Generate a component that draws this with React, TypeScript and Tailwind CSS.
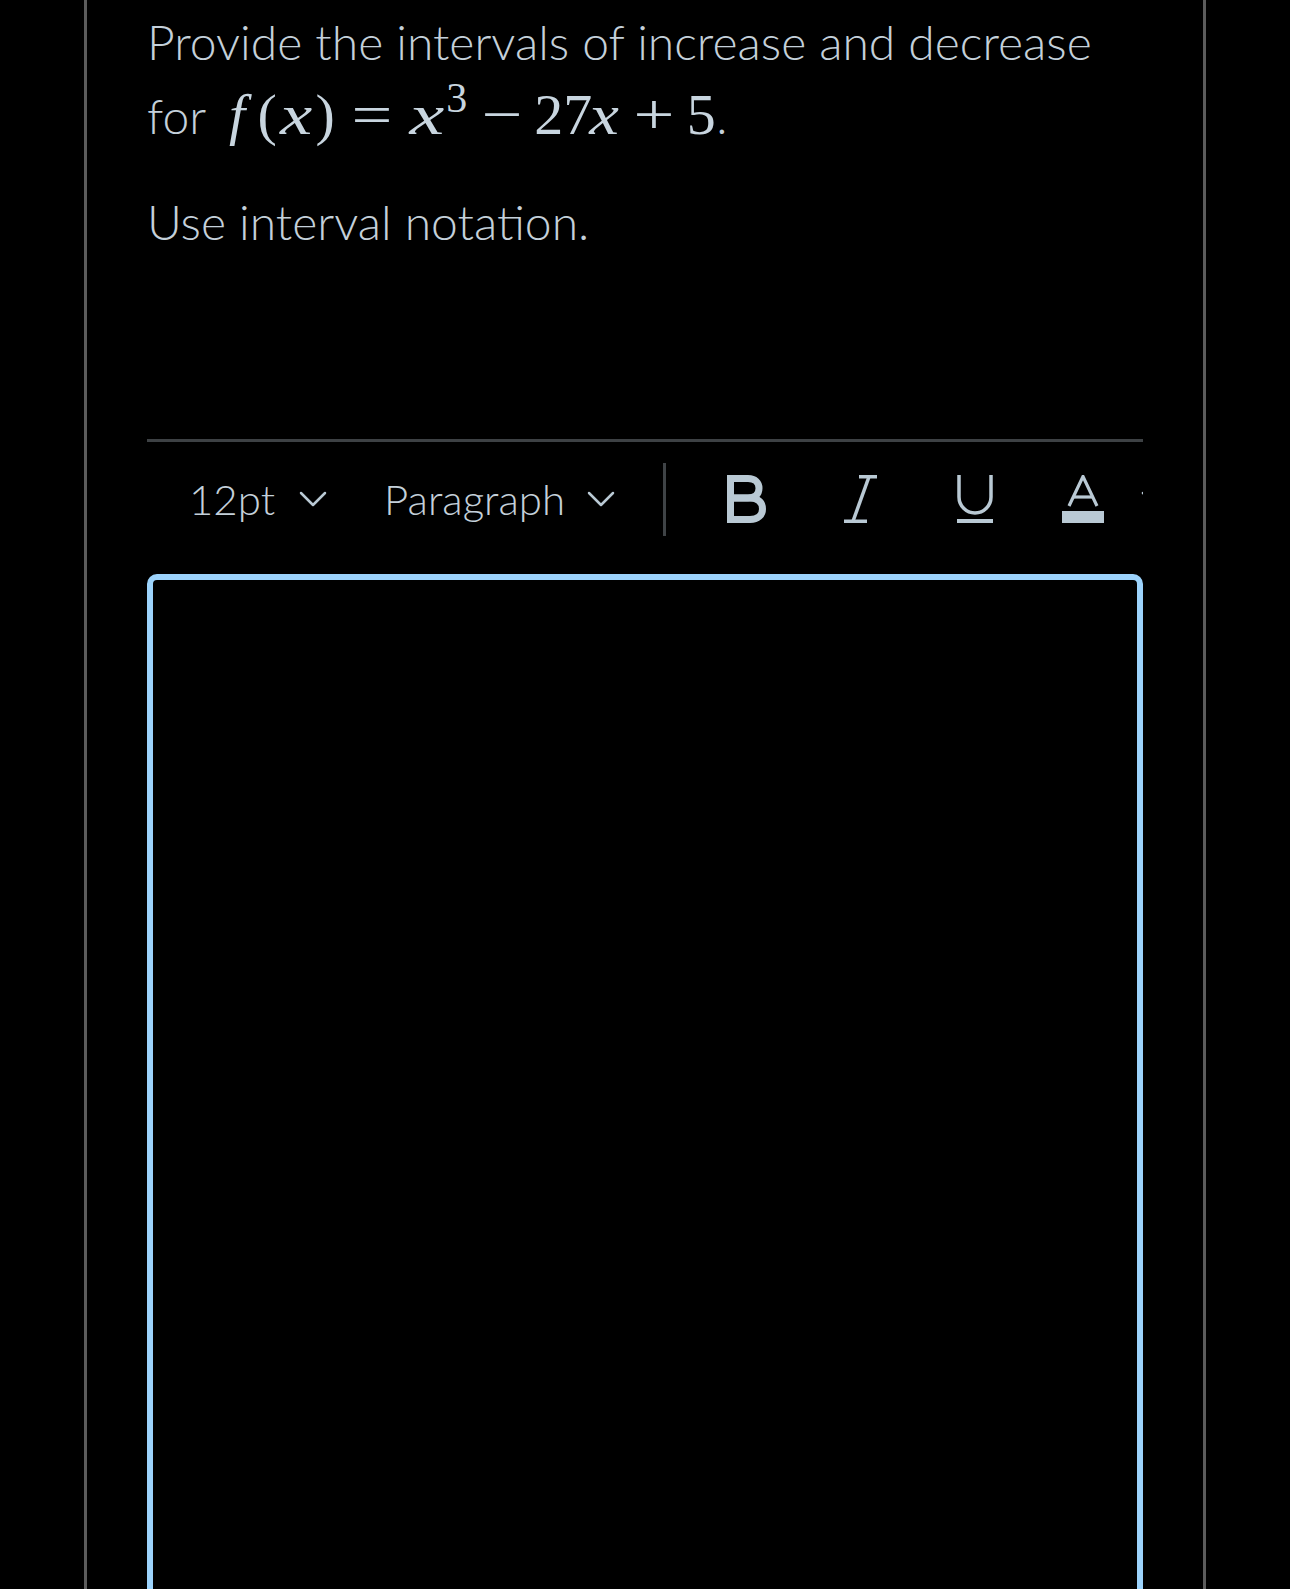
import React from "react";

const Chevron = ({ className = "" }: { className?: string }) => (
  <svg className={"shrink-0 " + className} width="28" height="16" viewBox="0 0 28 16" fill="none">
    <polyline points="2,2 14,14 26,2" stroke="#b9c9d4" strokeWidth="2.5" strokeLinecap="round" strokeLinejoin="round" />
  </svg>
);

export default function App() {
  return (
    <div className="h-[1589px] overflow-hidden bg-black px-[84px] font-['Lato',sans-serif] text-[#c4d0da]">
      <div className="h-[1589px] border-x-[3px] border-[#5c5c5c] px-[60px] pt-[5px]">
        <p className="text-[48px] font-light leading-[74px]">
          Provide the intervals of increase and decrease
          <br />
          for{" "}
          <span className="font-['Liberation_Serif',serif] text-[58px] leading-none text-[#c8d5df]">
            <span className="inline-block w-[38px] text-center italic">f</span>
            <span className="inline-block w-[22px] text-center">(</span>
            <span className="inline-block w-[36px] scale-x-125 text-center italic">x</span>
            <span className="inline-block w-[22px] text-center">)</span>
            <span className="inline-block w-[72px] scale-x-125 text-center">=</span>
            <span className="inline-block w-[38px] scale-x-135 text-center italic">x</span>
            <span className="relative -top-[22px] inline-block w-[24px] text-left text-[42px]">3</span>
            <span className="inline-block w-[64px] scale-x-125 text-center">−</span>
            <span className="inline-block w-[52px] text-left">27</span>
            <span className="inline-block w-[36px] scale-x-115 text-center italic">x</span>
            <span className="inline-block w-[64px] scale-x-125 text-center">+</span>
            <span className="inline-block w-[30px] text-center">5</span>
          </span>
          .
        </p>
        <p className="mt-[32px] text-[48px] font-light leading-[74px]">Use interval notation.</p>

        <div className="mt-[180px] border-t-[3px] border-[#3d4144]">
          <div className="flex h-[114px] items-center overflow-hidden">
            <span className="ml-[42px] shrink-0 text-[42px] font-light leading-none">12pt</span>
            <Chevron className="ml-[24px]" />
            <span className="ml-[57px] shrink-0 text-[42px] font-light leading-none">Paragraph</span>
            <Chevron className="ml-[22px]" />
            <div className="ml-[48px] h-[73px] w-[3px] shrink-0 bg-[#3f4346]" />
            <svg className="ml-[61px] shrink-0" width="39" height="48" viewBox="0 0 39 48" fill="none" stroke="#b9c9d4" strokeWidth="7">
              <path d="M3.5 3.5 H21 C28 3.5 32 7.5 32 13.25 C32 19 28 23 21 23 H3.5" />
              <path d="M3.5 23 H23 C31 23 35.5 27.5 35.5 34 C35.5 40 31 44.5 23 44.5 H3.5" />
              <path d="M3.5 0 V48" />
            </svg>
            <svg className="ml-[78px] shrink-0" width="33" height="48" viewBox="0 0 33 48" fill="none" stroke="#b9c9d4" strokeWidth="3.5">
              <path d="M15 1.75 H33" />
              <path d="M25 1.75 L9 46.25" />
              <path d="M0 46.25 H23" />
            </svg>
            <svg className="ml-[80px] shrink-0" width="36" height="48" viewBox="0 0 36 48" fill="none" stroke="#b9c9d4" strokeWidth="3.5">
              <path d="M2 0 V22 A16 16 0 0 0 34 22 V0" />
              <rect x="0" y="44" width="36" height="4" fill="#b9c9d4" stroke="none" />
            </svg>
            <svg className="ml-[69px] shrink-0" width="42" height="48" viewBox="0 0 42 48" fill="none" stroke="#b9c9d4" strokeWidth="3.2">
              <path d="M7 31 L21 1.5 L35 31" />
              <path d="M11.5 22 H30.5" />
              <rect x="0" y="36" width="42" height="12" fill="#b9c9d4" stroke="none" />
            </svg>
            <Chevron className="ml-[37px]" />
          </div>
        </div>

        <div className="mt-[18px] h-[1100px] rounded-[10px] border-[6px] border-[#9cd3fc]" />
      </div>
    </div>
  );
}
